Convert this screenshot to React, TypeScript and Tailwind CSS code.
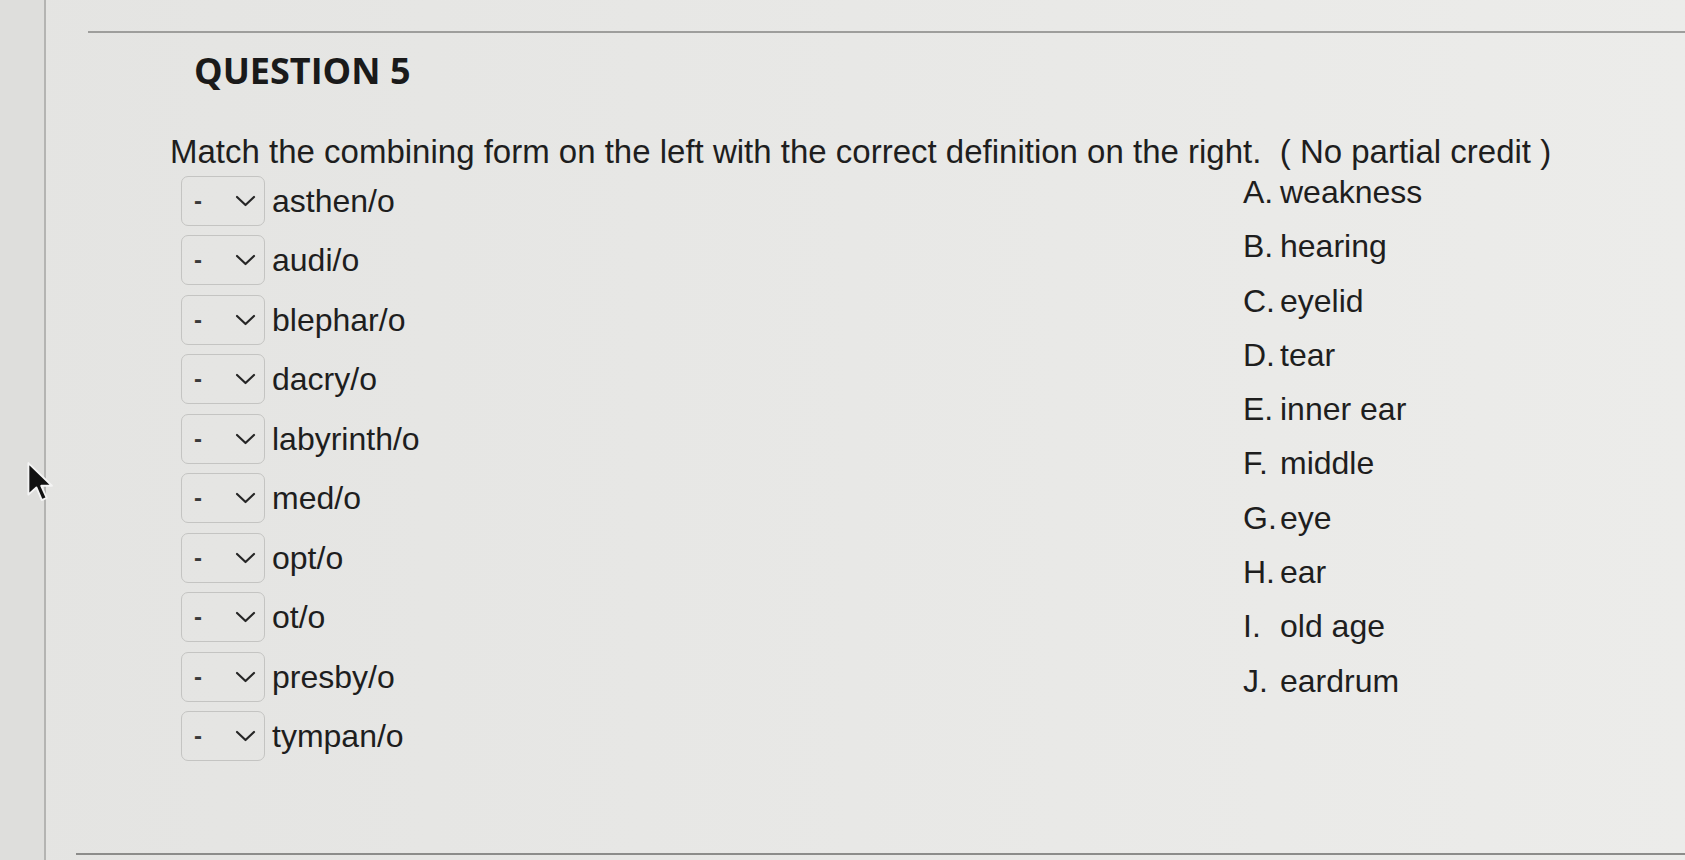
import React from "react";

const forms = [
  "asthen/o",
  "audi/o",
  "blephar/o",
  "dacry/o",
  "labyrinth/o",
  "med/o",
  "opt/o",
  "ot/o",
  "presby/o",
  "tympan/o",
];

const defs: [string, string][] = [
  ["A.", "weakness"],
  ["B.", "hearing"],
  ["C.", "eyelid"],
  ["D.", "tear"],
  ["E.", "inner ear"],
  ["F.", "middle"],
  ["G.", "eye"],
  ["H.", "ear"],
  ["I.", "old age"],
  ["J.", "eardrum"],
];

function Chevron() {
  return (
    <svg width="21" height="12" viewBox="0 0 21 12" fill="none">
      <polyline
        points="2,2 10.5,10 19,2"
        stroke="#262626"
        strokeWidth="2.2"
        strokeLinecap="round"
        strokeLinejoin="round"
      />
    </svg>
  );
}

function Dropdown() {
  return (
    <div className="w-[84px] h-[50px] shrink-0 rounded-[7px] border-[1.5px] border-[#c4c4c2] flex items-center pl-[12px] pr-[8px] justify-between">
      <span className="text-[24px] leading-none font-bold text-[#3a3a3a]">-</span>
      <Chevron />
    </div>
  );
}

export default function App() {
  return (
    <div
      className="relative w-[1685px] h-[860px] overflow-hidden flex bg-gradient-to-r from-[#e4e4e2] to-[#ececea] text-[#1e1e1e]"
      style={{ fontFamily: '"Liberation Sans", Arial, sans-serif' }}
    >
      <div className="w-[46px] shrink-0 border-r-2 border-[#b4b4b2] bg-[#dededc]" />
      <div className="flex-1 flex flex-col pt-[31px]">
        <div className="ml-[42px] border-t-2 border-[#9e9e9c]" />
        <h2
          className="ml-[148px] mt-[14px] text-[36px] leading-[48px] font-bold text-[#1a1a1a]"
          style={{ fontFamily: '"Open Sans", "Noto Sans", sans-serif' }}
        >
          QUESTION 5
        </h2>
        <p className="ml-[124px] mt-[38px] text-[33px] leading-[38px] whitespace-nowrap">
          Match the combining form on the left with the correct definition on the right.&nbsp; ( No partial credit )
        </p>
        <div className="flex items-start ml-[135px]">
          <div className="w-[1062px] mt-[4.5px] flex flex-col gap-[9.5px]">
            {forms.map((f) => (
              <div key={f} className="flex items-center h-[50px]">
                <Dropdown />
                <span className="ml-[7px] text-[32px] leading-[50px]">{f}</span>
              </div>
            ))}
          </div>
          <div className="-mt-[6px] flex flex-col">
            {defs.map(([l, d]) => (
              <div key={l} className="flex text-[32px] leading-[54.3px]">
                <span className="w-[37px] shrink-0">{l}</span>
                <span>{d}</span>
              </div>
            ))}
          </div>
        </div>
        <div className="flex-1" />
        <div className="ml-[30px] mb-[5px] border-t-2 border-[#8c8c8a]" />
      </div>
      <svg
        className="absolute left-[26px] top-[461px]"
        width="30"
        height="42"
        viewBox="0 0 14 20"
      >
        <path
          d="M1 1 L1 16 L4.8 12.6 L7.4 18.6 L9.7 17.6 L7.1 11.8 L12.2 11.8 Z"
          fill="#111"
          stroke="#f4f4f4"
          strokeWidth="0.9"
          strokeLinejoin="round"
        />
      </svg>
    </div>
  );
}
